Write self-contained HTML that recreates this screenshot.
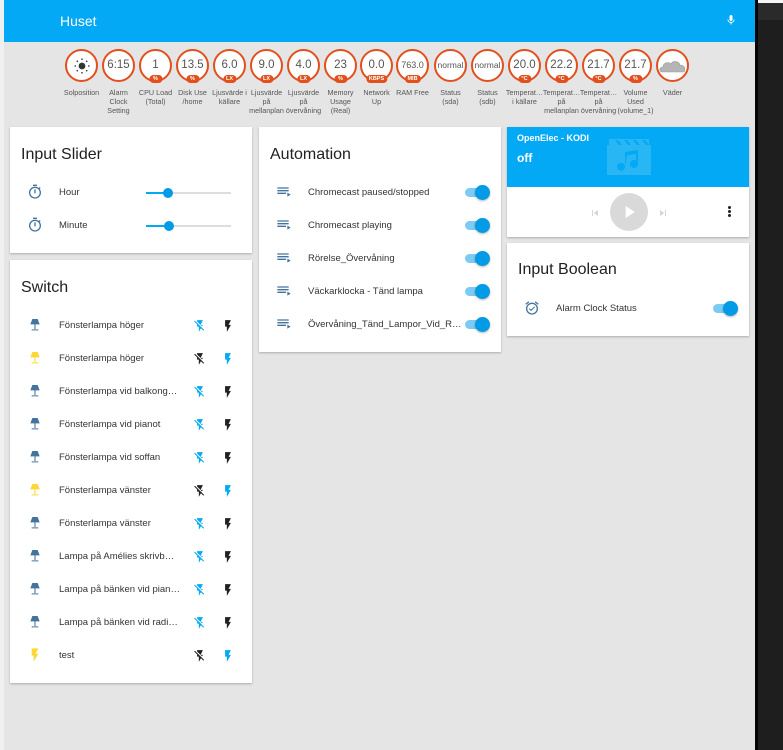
<!DOCTYPE html>
<html><head><meta charset="utf-8">
<style>
*{box-sizing:border-box;margin:0;padding:0}
body{width:783px;height:750px;overflow:hidden;background:#1e1e1e;font-family:"Liberation Sans",sans-serif;position:relative}
#page{position:absolute;left:4px;top:0;width:751px;height:750px;background:#e5e5e5}
#lstrip{position:absolute;left:0;top:0;width:4px;height:750px;background:#f0f0f0}
#hdr{position:absolute;left:4px;top:0;width:751px;height:42px;background:#03a9f4;color:#fff;font-size:14px}
#hdr .t{position:absolute;left:56px;top:13px}
#rb{position:absolute;left:755px;top:0;width:3px;height:750px;background:#050505}
#rtop{position:absolute;left:758px;top:0;width:25px;height:3px;background:#f5f5f5}
#rtop2{position:absolute;left:758px;top:3px;width:25px;height:17px;background:#2a2a2a}
.b{position:absolute;top:49px;width:37px;text-align:center}
.c{width:33px;height:33px;border:2px solid #e2501e;border-radius:50%;background:#fff;margin:0 auto;font-size:11.5px;color:#555;line-height:29px;position:relative}
.u{position:absolute;left:50%;transform:translateX(-50%);top:24px;background:#e2501e;color:#fff;font-size:5.5px;font-weight:bold;border-radius:5px;padding:0 3px;line-height:8px;min-width:13px}
.l{font-size:7.2px;color:#555;line-height:9px;margin-top:6px;white-space:nowrap;margin-left:-6px;margin-right:-6px}
.card{position:absolute;background:#fff;box-shadow:0 1px 2px rgba(0,0,0,.25)}
.ttl{position:absolute;left:11px;top:19px;font-size:16px;color:#212121}
.row{position:absolute;left:0;width:100%;height:20px;font-size:9.5px;color:#333}
.row .ic{position:absolute;left:17px;top:1px;width:16px;height:16px}
.row .tx{position:absolute;left:49px;top:4px;white-space:nowrap}
.tg{position:absolute;width:26px;height:15px}
.tg .tr{position:absolute;left:0;top:3px;width:22px;height:9px;border-radius:5px;background:#7dcaf3}
.tg .kn{position:absolute;left:10px;top:0;width:15px;height:15px;border-radius:50%;background:#039be5;box-shadow:0 1px 2px rgba(0,0,0,.3)}
.fi{position:absolute;width:14px;height:14px}
</style></head><body>
<div id="page"></div><div id="lstrip"></div>
<div id="hdr"><span class="t">Huset</span>
<svg style="position:absolute;left:721px;top:13px" width="12" height="14" viewBox="0 0 24 24"><path fill="#fff" d="M12 14c1.66 0 3-1.34 3-3V5c0-1.66-1.34-3-3-3S9 3.34 9 5v6c0 1.66 1.34 3 3 3zm5.3-3c0 3-2.540 5.1-5.3 5.1S6.7 14 6.7 11H5c0 3.41 2.72 6.23 6 6.72V21h2v-3.28c3.28-.48 6-3.3 6-6.72h-1.7z"/></svg>
</div>
<div id="rb"></div><div id="rtop"></div><div id="rtop2"></div>

<div class="b" style="left:63px"><div class="c"><svg style="margin-top:6px" width="18" height="18" viewBox="0 0 24 24"><circle cx="12" cy="12" r="4.5" fill="#333"/><g stroke="#333" stroke-width="1.8"><path d="M12 2v2M12 20v2M2 12h2M20 12h2M5 5l1.4 1.4M17.6 17.6L19 19M5 19l1.4-1.4M17.6 6.4L19 5"/></g></svg></div><div class="l">Solposition</div></div>
<div class="b" style="left:100px"><div class="c">6:15</div><div class="l">Alarm<br>Clock<br>Setting</div></div>
<div class="b" style="left:137px"><div class="c">1<span class="u">%</span></div><div class="l">CPU Load<br>(Total)</div></div>
<div class="b" style="left:174px"><div class="c">13.5<span class="u">%</span></div><div class="l">Disk Use<br>/home</div></div>
<div class="b" style="left:211px"><div class="c">6.0<span class="u">LX</span></div><div class="l">Ljusvärde i<br>källare</div></div>
<div class="b" style="left:248px"><div class="c">9.0<span class="u">LX</span></div><div class="l">Ljusvärde<br>på<br>mellanplan</div></div>
<div class="b" style="left:285px"><div class="c">4.0<span class="u">LX</span></div><div class="l">Ljusvärde<br>på<br>övervåning</div></div>
<div class="b" style="left:322px"><div class="c">23<span class="u">%</span></div><div class="l">Memory<br>Usage<br>(Real)</div></div>
<div class="b" style="left:358px"><div class="c">0.0<span class="u">KBPS</span></div><div class="l">Network<br>Up</div></div>
<div class="b" style="left:394px"><div class="c" style="font-size:9px">763.0<span class="u">MIB</span></div><div class="l">RAM Free</div></div>
<div class="b" style="left:432px"><div class="c" style="font-size:8.5px">normal</div><div class="l">Status<br>(sda)</div></div>
<div class="b" style="left:469px"><div class="c" style="font-size:8.5px">normal</div><div class="l">Status<br>(sdb)</div></div>
<div class="b" style="left:506px"><div class="c">20.0<span class="u">°C</span></div><div class="l">Temperat…<br>i källare</div></div>
<div class="b" style="left:543px"><div class="c">22.2<span class="u">°C</span></div><div class="l">Temperat…<br>på<br>mellanplan</div></div>
<div class="b" style="left:580px"><div class="c">21.7<span class="u">°C</span></div><div class="l">Temperat…<br>på<br>övervåning</div></div>
<div class="b" style="left:617px"><div class="c">21.7<span class="u">%</span></div><div class="l">Volume<br>Used<br>(volume_1)</div></div>
<div class="b" style="left:654px"><div class="c"><svg style="margin-top:5px" width="28" height="18" viewBox="0 0 28 18"><path d="M3 16c-3 0-3-5 1-5 0-4 5-6 8-3 2-4 8-3 9 1 4 0 6 3 4 7z" fill="#b5b5b5" stroke="#999" stroke-width=".6"/></svg></div><div class="l">Väder</div></div>

<div class="card" style="left:10px;top:127px;width:242px;height:126px">
<div class="ttl">Input Slider</div>
<div class="row" style="top:56px"><svg class="ic" viewBox="0 0 24 24"><path fill="#44739e" d="M15 1H9v2h6V1zm-4 13h2V8h-2v6zm8.03-6.61l1.42-1.42c-.43-.51-.9-.99-1.41-1.41l-1.42 1.42C16.07 4.74 14.12 4 12 4c-4.97 0-9 4.03-9 9s4.02 9 9 9 9-4.03 9-9c0-2.12-.74-4.07-1.97-5.61zM12 20c-3.87 0-7-3.13-7-7s3.13-7 7-7 7 3.13 7 7-3.13 7-7 7z"/></svg><span class="tx">Hour</span>
<div style="position:absolute;left:136px;top:9px;width:85px;height:2px;background:#ddd"></div><div style="position:absolute;left:136px;top:9px;width:22px;height:2px;background:#03a9f4"></div><div style="position:absolute;left:153px;top:5px;width:10px;height:10px;border-radius:50%;background:#039be5"></div></div>
<div class="row" style="top:89px"><svg class="ic" viewBox="0 0 24 24"><path fill="#44739e" d="M15 1H9v2h6V1zm-4 13h2V8h-2v6zm8.03-6.61l1.42-1.42c-.43-.51-.9-.99-1.41-1.41l-1.42 1.42C16.07 4.74 14.12 4 12 4c-4.97 0-9 4.03-9 9s4.02 9 9 9 9-4.03 9-9c0-2.12-.74-4.07-1.97-5.61zM12 20c-3.870 0-7-3.13-7-7s3.13-7 7-7 7 3.13 7 7-3.13 7-7 7z"/></svg><span class="tx">Minute</span>
<div style="position:absolute;left:136px;top:9px;width:85px;height:2px;background:#ddd"></div><div style="position:absolute;left:136px;top:9px;width:23px;height:2px;background:#03a9f4"></div><div style="position:absolute;left:154px;top:5px;width:10px;height:10px;border-radius:50%;background:#039be5"></div></div>
</div>

<div class="card" style="left:10px;top:260px;width:242px;height:423px" id="sw">
<div class="ttl">Switch</div>
</div>

<div class="card" style="left:259px;top:127px;width:242px;height:225px" id="au">
<div class="ttl">Automation</div>
</div>

<div class="card" style="left:507px;top:127px;width:242px;height:110px">
<div style="position:absolute;left:0;top:0;width:242px;height:60px;background:#03a9f4"></div>
<svg style="position:absolute;left:100px;top:12px;opacity:.15" width="44" height="36" viewBox="0 0 44 36"><path fill="#fff" d="M0 6h44v30H0zM2 0h40l0 6H2z"/><path fill="#03a9f4" d="M8 1l4 5h3l-4-5zM17 1l4 5h3l-4-5zM26 1l4 5h3l-4-5zM35 1l4 5h3l-4-5z"/><path fill="#03a9f4" d="M18 28a4 4 0 1 1 0-.5V13l13-2v14a4 4 0 1 1-2-3.4V15l-9 1.4z"/></svg>
<div style="position:absolute;left:10px;top:6px;color:#fff;font-size:9px;font-weight:bold">OpenElec - KODI</div>
<div style="position:absolute;left:10px;top:24px;color:#fff;font-size:12px;font-weight:bold">off</div>
<svg style="position:absolute;left:82px;top:80px" width="12" height="12" viewBox="0 0 24 24"><path fill="#d6d6d6" d="M6 6h2v12H6zm3.5 6l8.5 6V6z"/></svg>
<div style="position:absolute;left:103px;top:66px;width:38px;height:38px;border-radius:50%;background:#d9d9d9"></div>
<svg style="position:absolute;left:112px;top:75px" width="20" height="20" viewBox="0 0 24 24"><path fill="#fff" d="M8 5v14l11-7z"/></svg>
<svg style="position:absolute;left:150px;top:80px" width="12" height="12" viewBox="0 0 24 24"><path fill="#d6d6d6" d="M6 18l8.5-6L6 6v12zM16 6v12h2V6h-2z"/></svg>
<div style="position:absolute;left:221px;top:79px;width:3px;height:3px;border-radius:50%;background:#222;box-shadow:0 4px 0 #222,0 8px 0 #222"></div>
</div>

<div class="card" style="left:507px;top:243px;width:242px;height:93px">
<div class="ttl" style="top:18px">Input Boolean</div>
<div class="row" style="top:56px"><svg class="ic" viewBox="0 0 24 24"><path fill="#44739e" d="M10.54 14.53L8.41 12.4l-1.06 1.06 3.18 3.18 6-6-1.06-1.06zM17.337 1.81l4.607 3.845-1.28 1.535-4.61-3.843zM6.663 1.81l1.28 1.536-4.605 3.843-1.28-1.536zM12 4c-4.97 0-9 4.03-9 9s4.03 9 9 9 9-4.03 9-9-4.03-9-9-9zm0 16c-3.86 0-7-3.14-7-7s3.14-7 7-7 7 3.14 7 7-3.14 7-7 7z"/></svg><span class="tx">Alarm Clock Status</span>
<div class="tg" style="left:206px;top:2px"><div class="tr"></div><div class="kn"></div></div></div>
</div>

<script>
var FON='M7 2v11h3v9l7-12h-4l4-8z';
var FOFF='M3.27 3L2 4.27l5 5V13h3v9l3.58-6.14L17.73 20 19 18.73 3.27 3zM17 10h-4l4-8H7v2.18l8.46 8.46L17 10z';
var LAMP='M8 3h8l3 8H5zM11.2 11h1.6v7h-1.6zM7 18.5h10V20H7z';
var sw=[['Fönsterlampa höger',0],['Fönsterlampa höger',1],['Fönsterlampa vid balkong…',0],['Fönsterlampa vid pianot',0],['Fönsterlampa vid soffan',0],['Fönsterlampa vänster',1],['Fönsterlampa vänster',0],['Lampa på Amélies skrivb…',0],['Lampa på bänken vid pian…',0],['Lampa på bänken vid radi…',0],['test',2]];
var h='';
sw.forEach(function(s,i){
 var on=s[1]>0, col=on?'#fdd835':'#44739e';
 var ic=s[1]==2?'<svg class="ic" viewBox="0 0 24 24"><path fill="#fdd835" d="'+FON+'"/></svg>':'<svg class="ic" viewBox="0 0 24 24"><path fill="'+col+'" d="'+LAMP+'"/></svg>';
 h+='<div class="row" style="top:'+(56+i*33)+'px">'+ic+'<span class="tx">'+s[0]+'</span>'+
 '<svg class="fi" style="left:183px;top:3px" viewBox="0 0 24 24"><path fill="'+(on?'#212121':'#03a9f4')+'" d="'+FOFF+'"/></svg>'+
 '<svg class="fi" style="left:211px;top:3px" viewBox="0 0 24 24"><path fill="'+(on?'#03a9f4':'#212121')+'" d="'+FON+'"/></svg></div>';
});
document.getElementById('sw').innerHTML+=h;
var au=['Chromecast paused/stopped','Chromecast playing','Rörelse_Övervåning','Väckarklocka - Tänd lampa','Övervåning_Tänd_Lampor_Vid_R…'];
h='';
au.forEach(function(s,i){
 h+='<div class="row" style="top:'+(56+i*33)+'px"><svg class="ic" viewBox="0 0 24 24"><path fill="#44739e" d="M19 9H2v2h17V9zm0-4H2v2h17V5zM2 15h13v-2H2v2zm15-2v6l5-3-5-3z"/></svg><span class="tx">'+s+'</span><div class="tg" style="left:206px;top:2px"><div class="tr"></div><div class="kn"></div></div></div>';
});
document.getElementById('au').innerHTML+=h;
</script>
</body></html>
